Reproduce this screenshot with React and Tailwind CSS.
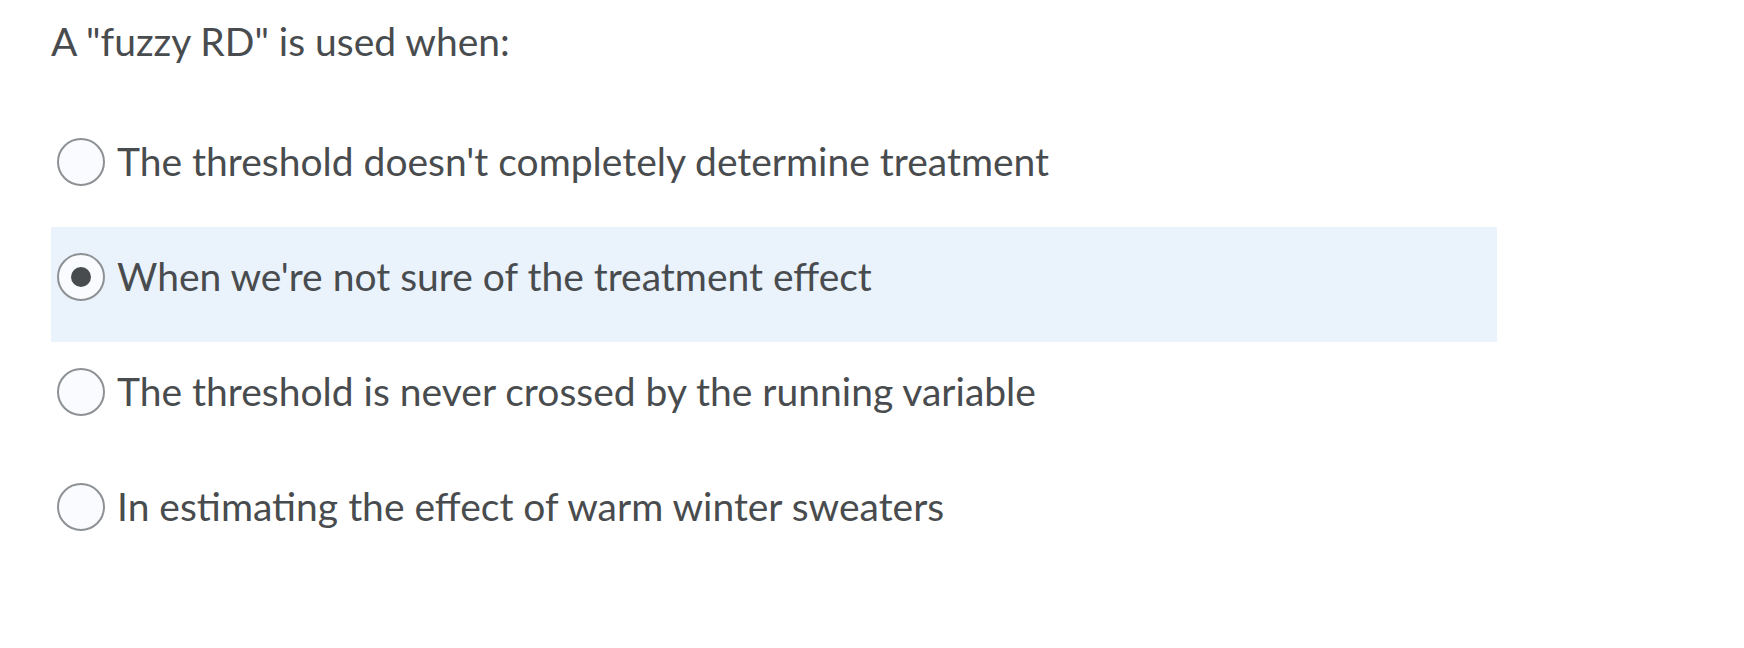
import { useState } from 'react';

const options = [
  "The threshold doesn't completely determine treatment",
  "When we're not sure of the treatment effect",
  'The threshold is never crossed by the running variable',
  'In estimating the effect of warm winter sweaters',
];

function Radio({ checked }) {
  return (
    <span className="mt-[26px] flex h-12 w-12 shrink-0 items-center justify-center rounded-full border-2 border-[#8d9194] bg-[#f9fbff]">
      {checked && <span className="h-5 w-5 rounded-full bg-[#494c4e]" />}
    </span>
  );
}

export default function App() {
  const [selected, setSelected] = useState(1);

  return (
    <div className="min-h-screen bg-white pl-[51px] pt-[17px] font-['Lato','Liberation_Sans',sans-serif] text-[#494c4e]">
      <h1 className="text-[39px] leading-[48px] font-normal">A "fuzzy RD" is used when:</h1>

      {/* OPTIONS */}
      <div className="mt-[47px] w-[1446px]">
        {options.map((label, i) => (
          <label
            key={i}
            onClick={() => setSelected(i)}
            className={`flex h-[115px] cursor-pointer items-start px-[6px] ${selected === i ? 'bg-[#eaf2fc]' : ''}`}
          >
            <Radio checked={selected === i} />
            <span className="ml-[12px] mt-[25px] text-[39px] leading-[48px]">{label}</span>
          </label>
        ))}
      </div>
    </div>
  );
}
